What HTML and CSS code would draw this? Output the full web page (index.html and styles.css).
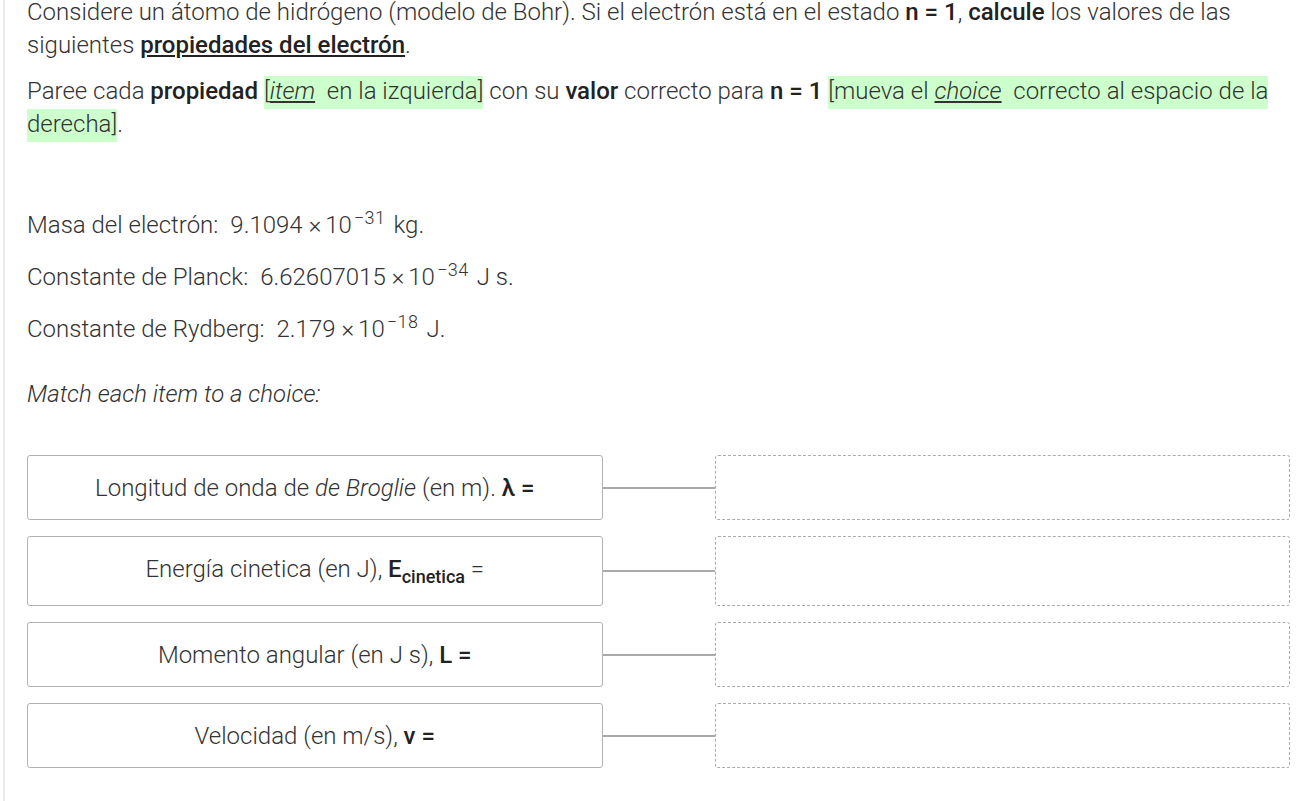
FILE: index.html
```html
<!DOCTYPE html>
<html lang="es">
<head>
<meta charset="utf-8">
<title>Modelo de Bohr</title>
<link rel="stylesheet" href="styles.css">
</head>
<body>
<div class="page">
  <p class="para first">Considere un átomo de hidrógeno (modelo de Bohr). Si el electrón está en el estado <b>n = 1</b>, <b>calcule</b> los valores de las siguientes <b><u>propiedades del electrón</u></b>.</p>
  <p class="para">Paree cada <b>propiedad</b> <span class="hl">[<i><u>item</u></i>&nbsp; en la izquierda]</span> con su <b>valor</b> correcto para <b>n = 1</b> <span class="hl">[mueva el <i><u>choice</u></i>&nbsp; correcto al espacio de la derecha]</span>.</p>

  <div class="consts">
    <p class="const">Masa del electrón:<span class="math">9.1094<span class="times">×</span>10<sup>−31</sup><span class="unit">kg</span>.</span></p>
    <p class="const">Constante de Planck:<span class="math">6.62607015<span class="times">×</span>10<sup>−34</sup><span class="unit">J s</span>.</span></p>
    <p class="const">Constante de Rydberg:<span class="math">2.179<span class="times">×</span>10<sup>−18</sup><span class="unit">J</span>.</span></p>
  </div>

  <p class="prompt">Match each item to a choice:</p>

  <div class="match">
    <div class="row">
      <div class="item">Longitud de onda de <i>de Broglie</i> (en m). <b>λ =</b></div>
      <div class="link"><span class="line"></span></div>
      <div class="slot"></div>
    </div>
    <div class="row">
      <div class="item">Energía cinetica (en J), <b>E<sub>cinetica</sub></b> =</div>
      <div class="link"><span class="line"></span></div>
      <div class="slot"></div>
    </div>
    <div class="row">
      <div class="item">Momento angular (en J s), <b>L =</b></div>
      <div class="link"><span class="line"></span></div>
      <div class="slot"></div>
    </div>
    <div class="row">
      <div class="item">Velocidad (en m/s), <b>v =</b></div>
      <div class="link"><span class="line"></span></div>
      <div class="slot"></div>
    </div>
  </div>
</div>
</body>
</html>
```

FILE: styles.css
```css
html, body {
  margin: 0;
  padding: 0;
  background: #ffffff;
}

body {
  font-family: "Roboto Light", Roboto, "Liberation Sans", sans-serif;
  font-weight: 300;
  font-size: 24px;
  line-height: 33px;
  color: #333333;
  overflow: hidden;
}

.page {
  margin-left: 3px;
  border-left: 2px solid #ebebeb;
  padding: 0 16px 0 22px;
  min-height: 820px;
}

b {
  font-family: Roboto, "Liberation Sans", sans-serif;
  font-weight: 500;
  color: #222222;
}

.para {
  margin: 13px 0 0;
}

.para.first {
  margin-top: -4px;
}

.hl {
  background: #ccffcc;
  padding: 1px 0 4px;
}

.consts {
  margin-top: 68px;
}

.const {
  margin: 0 0 19px;
}

.math {
  margin-left: 12px;
}

.times {
  margin: 0 4px 0 6px;
}

sup {
  font-size: 18px;
  line-height: 0;
  vertical-align: 9px;
  margin-left: 2px;
  letter-spacing: 0.5px;
}

.unit {
  margin-left: 8px;
}

.prompt {
  margin: 32px 0 0;
  font-style: italic;
}

.match {
  margin-top: 44px;
  display: flex;
  flex-direction: column;
  gap: 16px;
}

.row {
  display: grid;
  grid-template-columns: 1fr 112px 1fr;
}

.item {
  border: 1px solid #b3b3b3;
  border-radius: 3px;
  padding: 17px 10px 15px;
  line-height: 31px;
  text-align: center;
}

.item sub {
  font-size: 18px;
  line-height: 26px;
  vertical-align: -6px;
}

.link {
  display: flex;
  align-items: center;
}

.line {
  display: block;
  width: 100%;
  height: 2px;
  background: #a9a9a9;
}

.slot {
  border: 1px dashed #ababab;
  border-radius: 3px;
}
```
